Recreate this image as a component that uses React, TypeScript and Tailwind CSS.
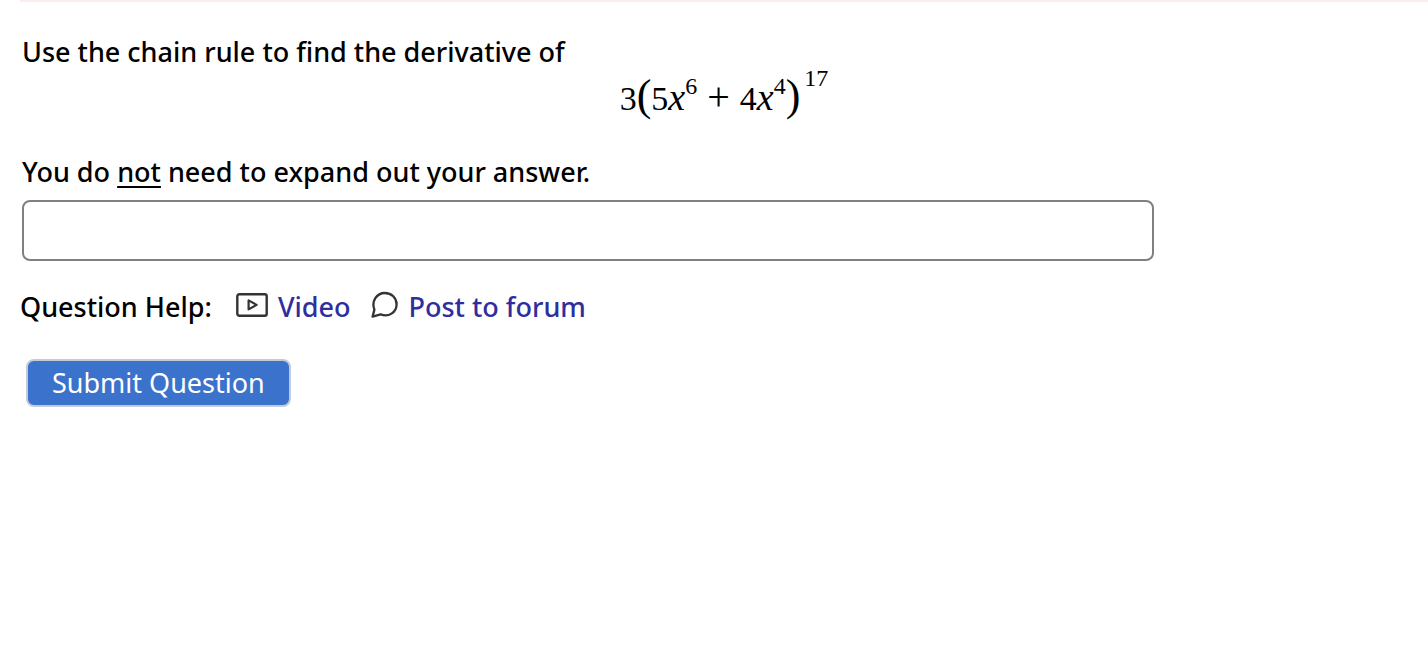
import React from 'react'

function Formula() {
  return (
    <div className="flex h-14 items-baseline justify-center font-['Liberation_Serif',serif] text-[34px] leading-12 font-normal whitespace-pre">
      <span>3</span>
      <span className="text-[44px]">(</span>
      <span>5</span>
      <i className="text-[38px]">x</i>
      <sup className="-top-4 text-2xl leading-none">6</sup>
      <span className="mx-2.5 text-[40px]">+</span>
      <span>4</span>
      <i className="text-[38px]">x</i>
      <sup className="-top-4 text-2xl leading-none">4</sup>
      <span className="text-[44px]">)</span>
      <sup className="-top-6 ml-1 text-2xl leading-none">17</sup>
    </div>
  )
}

function VideoIcon() {
  return (
    <svg className="-mt-1" width="32" height="24" viewBox="0 0 32 24" fill="none" stroke="#333" strokeWidth="2.4" strokeLinejoin="round">
      <rect x="1.3" y="1.3" width="29.4" height="21.4" rx="2" />
      <path d="M12.6 7.4v9l8-4.5z" strokeWidth="2.2" />
    </svg>
  )
}

function ForumIcon() {
  return (
    <svg className="-mt-1" width="28" height="28" viewBox="0 0 28 28" fill="none" stroke="#333" strokeWidth="2.3" strokeLinejoin="round">
      <path d="M1.6 25.6L3.4 18.6C0.2 10.4 5.6 2 13.8 2C20.6 2 25.6 7 25.6 13.2C25.6 21.6 17.4 26.6 9.6 23.3Z" />
    </svg>
  )
}

export default function App() {
  return (
    <div className="min-h-screen bg-white pl-5 font-['Noto_Sans',sans-serif] text-[27px] leading-10 font-medium text-black">
      <div className="h-0.5 bg-[#fdeeee]"></div>

      {/* Question */}
      <main className="pt-[30px]">
        <div className="px-0.5">
          <p id="question">Use the chain rule to find the derivative of</p>
          <Formula />
          <p className="mt-6">
            <label htmlFor="answer">
              You do <u className="decoration-2 underline-offset-4">not</u> need to expand out your answer.
            </label>
          </p>
          <input
            type="text"
            id="answer"
            className="mt-2 block h-[61px] w-full max-w-[1132px] rounded-lg border-2 border-[#808080] bg-white px-3"
          />
        </div>

        {/* Help links */}
        <div className="mt-[26px] flex items-center">
          <span>Question Help:</span>
          <a href="#video" className="ml-6 flex items-center gap-2.5 text-[#2e2e9f]">
            <VideoIcon />
            Video
          </a>
          <a href="#forum" className="ml-5 flex items-center gap-2.5 text-[#2e2e9f]">
            <ForumIcon />
            Post to forum
          </a>
        </div>

        <button
          type="button"
          className="mt-8 ml-1.5 h-12 rounded-lg border-2 border-[#c3cbd8] bg-[#3b72cb] px-6 font-normal text-white"
        >
          Submit Question
        </button>
      </main>
    </div>
  )
}
